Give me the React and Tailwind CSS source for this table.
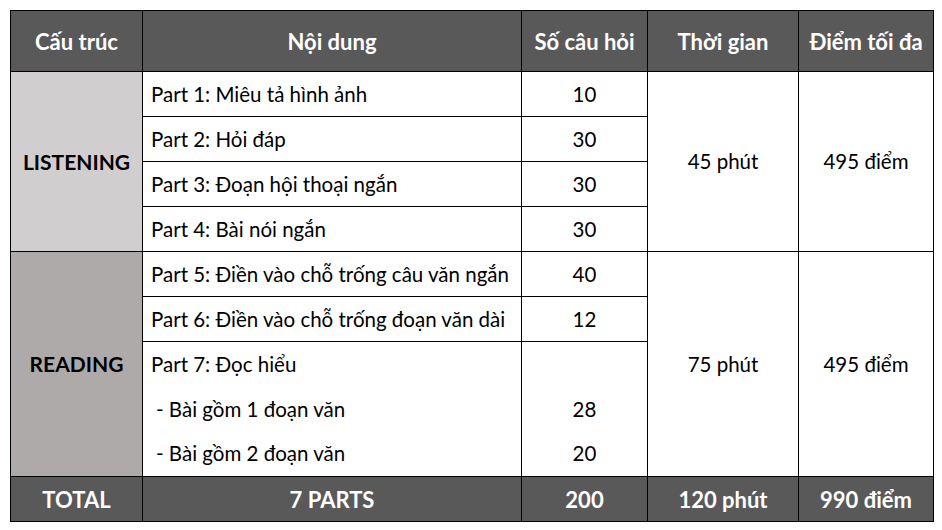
import React from 'react';

const HEAD = 'bg-[#595959] text-white font-bold text-[22px] border border-black text-center';
const CELL = 'border border-black';

export default function App() {
  return (
    <div className="w-[942px] h-[530px] bg-white pt-[10px] pl-[10px]" style={{ fontFamily: 'Lato, "Open Sans", sans-serif' }}>
      <table className="border-collapse text-[20.5px] text-black table-fixed">
        <colgroup>
          <col className="w-[132px]" />
          <col className="w-[379px]" />
          <col className="w-[126px]" />
          <col className="w-[151px]" />
          <col className="w-[135px]" />
        </colgroup>
        <thead>
          <tr className="h-[61px]">
            <th className={HEAD}>Cấu trúc</th>
            <th className={HEAD}>Nội dung</th>
            <th className={HEAD}>Số câu hỏi</th>
            <th className={HEAD}>Thời gian</th>
            <th className={HEAD}>Điểm tối đa</th>
          </tr>
        </thead>
        <tbody>
          {/* Listening */}
          <tr className="h-[45px]">
            <td rowSpan={4} className={`${CELL} bg-[#d0cece] text-center font-bold text-[21px]`}>LISTENING</td>
            <td className={`${CELL} pl-[8px]`}>Part 1: Miêu tả hình ảnh</td>
            <td className={`${CELL} text-center`}>10</td>
            <td rowSpan={4} className={`${CELL} text-center`}>45 phút</td>
            <td rowSpan={4} className={`${CELL} text-center`}>495 điểm</td>
          </tr>
          <tr className="h-[45px]">
            <td className={`${CELL} pl-[8px]`}>Part 2: Hỏi đáp</td>
            <td className={`${CELL} text-center`}>30</td>
          </tr>
          <tr className="h-[45px]">
            <td className={`${CELL} pl-[8px]`}>Part 3: Đoạn hội thoại ngắn</td>
            <td className={`${CELL} text-center`}>30</td>
          </tr>
          <tr className="h-[45px]">
            <td className={`${CELL} pl-[8px]`}>Part 4: Bài nói ngắn</td>
            <td className={`${CELL} text-center`}>30</td>
          </tr>

          {/* Reading */}
          <tr className="h-[45px]">
            <td rowSpan={5} className={`${CELL} bg-[#aeaaaa] text-center font-bold text-[21px]`}>READING</td>
            <td className={`${CELL} pl-[8px]`}>Part 5: Điền vào chỗ trống câu văn ngắn</td>
            <td className={`${CELL} text-center`}>40</td>
            <td rowSpan={5} className={`${CELL} text-center`}>75 phút</td>
            <td rowSpan={5} className={`${CELL} text-center`}>495 điểm</td>
          </tr>
          <tr className="h-[45px]">
            <td className={`${CELL} pl-[8px]`}>Part 6: Điền vào chỗ trống đoạn văn dài</td>
            <td className={`${CELL} text-center`}>12</td>
          </tr>
          <tr className="h-[45px]">
            <td className="border-x border-t border-black pl-[8px]">Part 7: Đọc hiểu</td>
            <td className="border-x border-t border-black text-center"></td>
          </tr>
          <tr className="h-[45px]">
            <td className="border-x border-black pl-[13px]">- Bài gồm 1 đoạn văn</td>
            <td className="border-x border-black text-center">28</td>
          </tr>
          <tr className="h-[45px]">
            <td className="border-x border-b border-black pl-[13px]">- Bài gồm 2 đoạn văn</td>
            <td className="border-x border-b border-black text-center">20</td>
          </tr>

          {/* Total */}
          <tr className="h-[45px]">
            <td className={HEAD}>TOTAL</td>
            <td className={HEAD}>7 PARTS</td>
            <td className={HEAD}>200</td>
            <td className={HEAD}>120 phút</td>
            <td className={HEAD}>990 điểm</td>
          </tr>
        </tbody>
      </table>
    </div>
  );
}
